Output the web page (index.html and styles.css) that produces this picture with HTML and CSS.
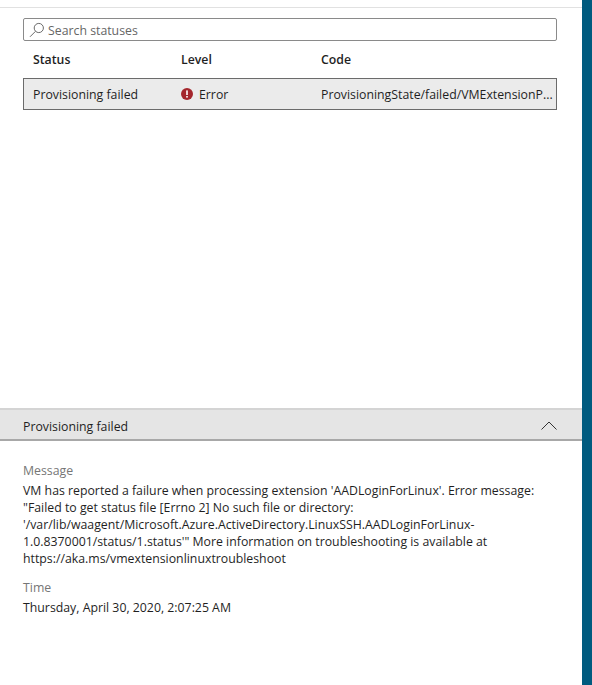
FILE: index.html
```html
<!DOCTYPE html>
<html lang="en">
<head>
  <meta charset="UTF-8">
  <title>Statuses</title>
  <link rel="stylesheet" href="styles.css">
</head>
<body>
  <div class="layout">
    <div class="panel">
      <div class="statuses">
        <div class="search">
          <svg class="search-icon" width="16" height="16" viewBox="0 0 16 16">
            <circle cx="9.8" cy="6" r="4.6" fill="none" stroke="#6b6b6b"/>
            <path d="M6.5 9.3L1 14.8" stroke="#6b6b6b" fill="none"/>
          </svg>
          <span class="search-text">Search statuses</span>
        </div>
        <div class="row head">
          <div class="col-status">Status</div>
          <div class="col-level">Level</div>
          <div class="col-code">Code</div>
        </div>
        <div class="row selected">
          <div class="col-status">Provisioning failed</div>
          <div class="col-level">
            <svg class="error-icon" width="12" height="12" viewBox="0 0 12 12">
              <circle cx="6" cy="6" r="6" fill="#a4262c"/>
              <rect x="5.2" y="2.4" width="1.6" height="4.6" fill="#fff"/>
              <rect x="5.2" y="8" width="1.6" height="1.6" fill="#fff"/>
            </svg>
            Error
          </div>
          <div class="col-code">ProvisioningState/failed/VMExtensionP...</div>
        </div>
      </div>

      <div class="details-bar">
        <span class="details-title">Provisioning failed</span>
        <svg width="16" height="9" viewBox="0 0 16 9">
          <path d="M0.5 8.5L8 1l7.5 7.5" fill="none" stroke="#333"/>
        </svg>
      </div>

      <div class="details">
        <div class="label">Message</div>
        <div class="value">VM has reported a failure when processing extension 'AADLoginForLinux'. Error message: "Failed to get status file [Errno 2] No such file or directory: '/var/lib/waagent/Microsoft.Azure.ActiveDirectory.LinuxSSH.AADLoginForLinux-1.0.8370001/status/1.status'" More information on troubleshooting is available at https://aka.ms/vmextensionlinuxtroubleshoot</div>
        <div class="label time">Time</div>
        <div class="value">Thursday, April 30, 2020, 2:07:25 AM</div>
      </div>
    </div>
    <div class="sidebar"></div>
  </div>
</body>
</html>
```
FILE: styles.css
```css
html, body {
  margin: 0;
  padding: 0;
  height: 100%;
}

body {
  font-family: "Open Sans", "Noto Sans", sans-serif;
  font-size: 12.3px;
  color: #1f1f1f;
  background-color: #fff;
}

.layout {
  display: flex;
  height: 685px;
  overflow: hidden;
}

.panel {
  flex: 1;
  min-width: 0;
  padding-top: 7px;
}

.sidebar {
  width: 10px;
  background-color: #005b7f;
}

.statuses {
  height: 401px;
  box-sizing: border-box;
  border-top: 1px solid #e1e1e1;
  padding: 10px 25px 0 23px;
}

.search {
  display: flex;
  align-items: center;
  height: 23px;
  box-sizing: border-box;
  border: 1px solid #8a8a8a;
  border-radius: 2px;
  padding-left: 5px;
  color: #666;
}

.search-icon {
  margin-right: 3px;
}

.search-text {
  padding-top: 2px;
}

.row {
  display: flex;
  align-items: center;
  box-sizing: border-box;
  padding-left: 9px;
}

.head {
  height: 37px;
  padding-left: 10px;
  font-weight: 600;
}

.selected {
  height: 32px;
  border: 1px solid #6b6b6b;
  background-color: #ebebeb;
}

.col-status {
  width: 148px;
  flex: none;
}

.col-level {
  width: 140px;
  flex: none;
  display: flex;
  align-items: center;
}

.error-icon {
  margin-right: 6px;
}

.col-code {
  flex: 1;
  min-width: 0;
  white-space: nowrap;
}

.details-bar {
  display: flex;
  align-items: center;
  justify-content: space-between;
  height: 33px;
  box-sizing: border-box;
  padding: 2px 25px 0 23px;
  background-color: #e5e5e5;
  border-top: 2px solid #d4d4d4;
  border-bottom: 2px solid #a8a8a8;
}

.details-title {
  padding-top: 2px;
}

.details {
  padding: 21px 25px 0 23px;
}

.label {
  color: #767676;
  line-height: 18px;
}

.value {
  line-height: 17px;
  margin-top: 2px;
}

.time {
  margin-top: 12px;
}
```
